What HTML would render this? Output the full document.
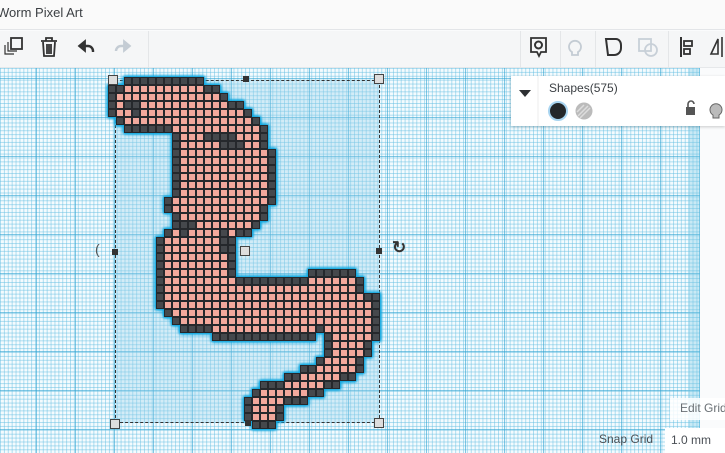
<!DOCTYPE html>
<html><head><meta charset="utf-8"><style>
*{margin:0;padding:0;box-sizing:border-box}
body{width:725px;height:453px;overflow:hidden;background:#fafbfc;font-family:"Liberation Sans",sans-serif;position:relative}
#top{position:absolute;left:0;top:0;width:725px;height:30px;background:#fafafa;border-bottom:1px solid #e3e5e8}
#top span{position:absolute;left:-3px;top:5px;font-size:13px;color:#3c4044}
#tb{position:absolute;left:0;top:31px;width:725px;height:37px;background:#f5f6f7;border-bottom:1px solid #e6e8ea}
.sep{position:absolute;top:0;width:1px;height:37px;background:#e4e6e8}
#grid{position:absolute;left:0;top:68px;width:700px;height:385px;background-color:#f4fbfe;
background-image:linear-gradient(90deg,rgba(50,165,210,.6) 1px,transparent 1px),linear-gradient(rgba(50,165,210,.6) 1px,transparent 1px),linear-gradient(90deg,rgba(100,190,225,.5) 1px,transparent 1px),linear-gradient(rgba(100,190,225,.5) 1px,transparent 1px);
background-size:39px 39px,39px 39px,3.9px 3.9px,3.9px 3.9px;background-position:36px 0,0 10px,0 0,0 0}
#edge{position:absolute;left:688px;top:68px;width:12px;height:385px;background:rgba(120,200,230,.35)}
#sel{position:absolute;left:115px;top:80px;width:265px;height:343px;background:rgba(150,210,235,.35);border:1px dashed #333}
.h{position:absolute;width:10px;height:10px;background:#ddd;border:1.5px solid #444}
.hs{position:absolute;width:6px;height:6px;background:#333}
#panel{position:absolute;left:511px;top:76px;width:214px;height:50px;background:#fff;box-shadow:0 1px 3px rgba(0,0,0,.2)}
</style></head><body>
<div id="top"><span>Worm Pixel Art</span></div>
<div id="tb">
<svg width="725" height="37" style="position:absolute;left:0;top:0" fill="none" stroke="#333" stroke-width="1.8">
<rect x="11" y="7" width="11" height="11" fill="#f5f6f7"/><path d="M8 11v9h9M5 14v9h9" stroke-width="1.2"/>
<path d="M41 10h16M46 10V7h6v3M43 11l1 14h10l1-14M47 13v10M49 13v10M51 13v10"/>
<path d="M81 15h7a5 5 0 0 1 5 5v1" stroke-width="2.4"/><path d="M79 15l6-5v10z" fill="#333"/>
<path d="M128 15h-7a5 5 0 0 0-5 5" stroke="#c4ccd4" stroke-width="2.4"/><path d="M130 15l-6-5v10z" fill="#c4ccd4" stroke="#c4ccd4"/>
<path d="M531 7h15v14h-5l-2 4-2-4h-6z" stroke-width="1.8"/><circle cx="538.5" cy="14" r="3.5" stroke-width="2"/>
<path d="M572 21a6 6 0 1 1 6 0v3h-6z" stroke="#c4ccd4"/>
<path d="M606 8h10c3 0 5 3 5 6v3c0 4-3 7-7 7h-6z" stroke-width="2"/>
<rect x="639" y="8" width="12" height="12" stroke="#c8d0d8"/><circle cx="651" cy="19" r="6" stroke="#c8d0d8"/>
<path d="M681 6v20" stroke-width="2"/><rect x="684" y="10" width="8" height="5"/><rect x="684" y="18" width="6" height="5"/>
<path d="M718 8l-7 15h7zM722 6v20" stroke-width="1.6"/>
</svg>
<div class="sep" style="left:148px"></div><div class="sep" style="left:520px"></div><div class="sep" style="left:560px"></div><div class="sep" style="left:595px"></div><div class="sep" style="left:668px"></div>
</div>
<div id="grid"></div><div id="edge"></div>
<div id="sel"></div>
<svg id="worm" width="725" height="453" style="position:absolute;left:0;top:0;filter:drop-shadow(0 0 1.5px #12a8e0) drop-shadow(0 0 1px #12a8e0) drop-shadow(0 0 0.5px #12a8e0)"></svg>
<div class="h" style="left:108px;top:75px"></div><div class="h" style="left:374px;top:74px"></div>
<div class="h" style="left:110px;top:419px"></div><div class="h" style="left:374px;top:418px"></div>
<div class="h" style="left:240px;top:246px"></div>
<div class="hs" style="left:243px;top:76px"></div><div class="hs" style="left:112px;top:249px"></div>
<div class="hs" style="left:376px;top:248px"></div><div class="hs" style="left:245px;top:420px"></div>
<div style="position:absolute;left:95px;top:241px;font-size:14px;color:#555">(</div>
<div style="position:absolute;left:392px;top:238px;font-size:17px;font-weight:bold;color:#333">↻</div>
<div id="panel">
<svg width="214" height="50" style="position:absolute;left:0;top:0">
<path d="M8 14h12l-6 7z" fill="#2d3033"/>
<line x1="27" y1="0" x2="27" y2="50" stroke="#eee"/>
<circle cx="47" cy="35" r="9" fill="#24272a" stroke="#a8d4f0" stroke-width="2"/>
<circle cx="73" cy="35" r="8.5" fill="#bbb"/>
<path d="M67 40l10-10M69 42l10-10M66 36l7-7" stroke="#ddd" stroke-width="1.5"/>
<rect x="175" y="31" width="9" height="8" fill="#555"/><path d="M177 31v-3a3 3 0 0 1 6 0" fill="none" stroke="#555" stroke-width="1.6"/>
<path d="M202 39a6 6 0 1 1 6 0v3h-6z" fill="#bbb" stroke="#666"/>
</svg>
<div style="position:absolute;left:38px;top:5px;font-size:12px;color:#3c4044">Shapes(575)</div>
</div>
<div style="position:absolute;left:670px;top:398px;width:60px;height:22px;background:rgba(255,255,255,.85);font-size:12px;color:#6a7075;padding:3px 0 0 10px">Edit Grid</div>
<div style="position:absolute;left:599px;top:432px;font-size:12px;color:#4a4f55">Snap Grid</div>
<div style="position:absolute;left:665px;top:428px;width:60px;height:25px;background:#fff;font-size:12px;color:#4a4f55;padding:5px 0 0 6px">1.0 mm</div>
<script>
var R=[[2,11],[0,13],[0,14],[0,16],[0,17],[1,18],[2,19],[8,19],[8,19],[8,20],[8,20],[8,20],[8,20],[8,20],[8,20],[7,20],[7,19],[8,19],[8,18],[7,17],[6,15],[6,15],[6,15],[6,15],[6,15,25,30],[6,31],[6,31],[6,33],[6,33],[7,33],[8,33],[9,33],[13,25,27,33],[27,32],[27,32],[26,31],[24,31],[22,30],[19,28],[18,26],[17,24],[17,21],[17,21],[18,20]];
var S={};R.forEach(function(r,i){for(var k=0;k<r.length;k+=2)for(var c=r[k];c<=r[k+1];c++)S[i+','+c]=1});
var dark={'3,2':1,'3,3':1,'4,3':1,'7,12':1,'7,13':1,'7,14':1,'7,15':1,'8,14':1,'8,15':1,'8,16':1,'18,9':1,'18,10':1,'19,9':1,'19,14':1,'20,14':1,'21,14':1};
var h='',x0=108,y0=77;
for(var k in S){var p=k.split(','),r=+p[0],c=+p[1];
var b=!(S[(r-1)+','+c]&&S[(r+1)+','+c]&&S[r+','+(c-1)]&&S[r+','+(c+1)])||dark[k];
var x=x0+c*8,y=y0+r*8;
h+='<rect x="'+x+'" y="'+y+'" width="8" height="8" fill="#25282c"/><rect x="'+(x+1)+'" y="'+(y+1)+'" width="6" height="6" fill="'+(b?'#45484c':'#f2a89c')+'"/>';}
document.getElementById('worm').innerHTML=h;
</script>
</body></html>
